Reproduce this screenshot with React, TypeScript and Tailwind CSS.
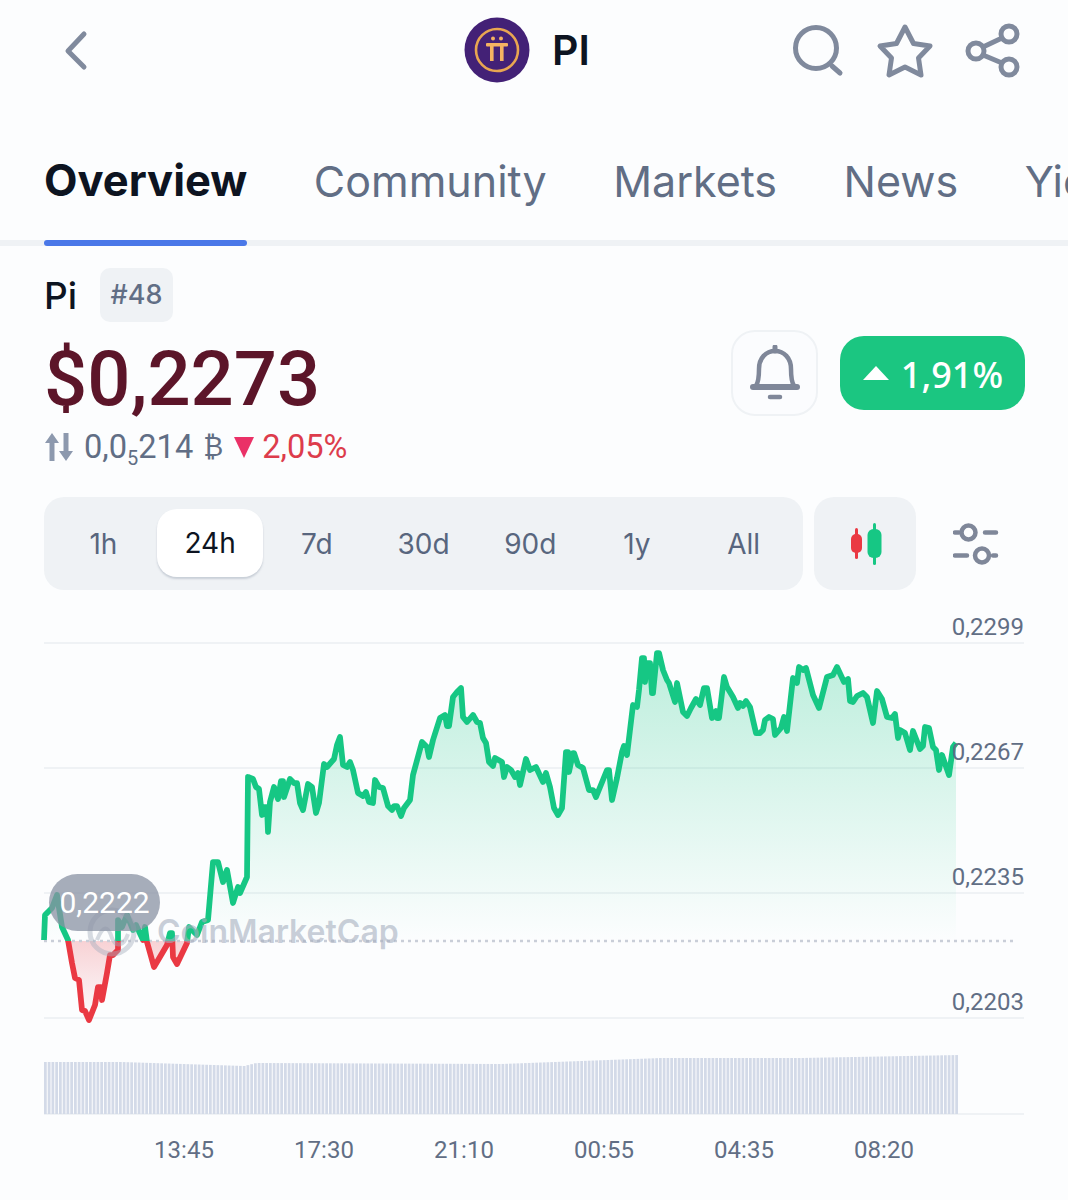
const points =
  "44,940 45,915 52,908 57,895 62,927 68,940 72,963 75,978 79,980 82,1010 85,1011 89,1020 95,1005 98,987 101,987 102,1000 107,973 110,955 113,955 118,950 118,920 122,927 127,915 133,930 136,925 143,940 145,927 147,942 154,967 167,945 170,933 172,933 173,957 177,964 187,943 189,927 197,935 202,922 208,920 213,862 218,862 223,882 227,870 233,903 238,887 240,893 247,877 " +
  "248,777 253,779 256,787 259,789 262,815 264,807 267,807 268,832 270,802 274,787 278,799 281,781 283,781 284,797 290,779 294,783 297,783 300,803 303,810 308,784 312,787 316,813 319,803 324,764 327,767 334,759 337,745 340,737 343,765 347,767 350,762 353,770 358,793 363,796 366,792 369,802 373,803 375,780 379,787 383,788 388,806 392,810 394,806 397,806 401,816 404,808 410,800 413,775 422,742 427,747 429,757 433,740 440,718 445,715 447,726 449,726 453,697 457,692 461,688 463,717 467,722 473,715 477,722 480,723 483,738 486,743 489,762 493,766 495,758 502,762 504,777 507,767 511,770 515,777 518,773 520,785 526,759 530,770 536,767 543,782 546,773 550,787 554,808 558,815 562,808 566,752 568,752 569,772 573,753 574,753 578,765 583,768 589,790 593,790 596,797 607,770 609,770 612,800 617,778 622,752 624,746 627,755 633,705 637,707 " +
  "639,690 642,658 644,658 645,682 647,663 650,663 652,693 653,693 657,653 659,653 663,670 667,680 669,683 675,702 677,683 683,712 687,716 691,708 696,699 700,705 704,688 707,688 712,718 716,711 717,718 719,718 724,677 727,687 733,697 738,708 740,703 743,706 746,701 750,707 756,733 760,733 763,730 765,720 769,717 773,719 775,735 781,728 784,717 787,731 793,678 797,683 799,667 803,670 806,668 813,695 819,708 827,677 833,675 837,667 844,682 848,679 850,701 853,702 857,696 863,693 867,697 873,723 877,691 882,699 887,717 892,718 895,714 898,738 900,730 905,733 910,750 913,731 920,749 923,746 925,727 929,728 933,747 936,750 939,770 942,755 949,775 953,747 956,743";

const periods = ["1h", "24h", "7d", "30d", "90d", "1y", "All"];
const tabs = ["Overview", "Community", "Markets", "News", "Yield"];
const times = ["13:45", "17:30", "21:10", "00:55", "04:35", "08:20"];
const gridLines = [643, 768, 893, 1018, 1114];
const yLabels = [
  { label: "0,2299", cls: "top-[23px]" },
  { label: "0,2267", cls: "top-[148px]" },
  { label: "0,2235", cls: "top-[273px]" },
  { label: "0,2203", cls: "top-[398px]" },
];

// top edge of the volume bars, by x
const volumeTop = (x: number) => {
  const stops = [
    [44, 1062],
    [120, 1062],
    [243, 1066],
    [255, 1063],
    [500, 1064],
    [660, 1058],
    [800, 1058],
    [958, 1055],
  ];
  for (let i = 1; i < stops.length; i++) {
    if (x <= stops[i][0]) {
      const [x0, y0] = stops[i - 1];
      const [x1, y1] = stops[i];
      return y0 + ((y1 - y0) * (x - x0)) / (x1 - x0);
    }
  }
  return 1055;
};

const bars: number[] = [];
for (let x = 44; x < 957; x += 3.75) bars.push(x);

const PiLogo = () => (
  <svg width="66" height="66" viewBox="0 0 66 66">
    <circle cx="33" cy="33" r="32.5" fill="#432176" />
    <circle cx="33" cy="33" r="21" fill="none" stroke="#e9a651" strokeWidth="2.6" />
    <rect x="22" y="26" width="22" height="3.4" rx="1" fill="#f5b362" />
    <rect x="26" y="28" width="3.6" height="16" fill="#f5b362" />
    <rect x="36" y="28" width="3.6" height="16" fill="#f5b362" />
    <circle cx="29" cy="21.5" r="2" fill="#f5b362" />
    <circle cx="37" cy="21.5" r="2" fill="#f5b362" />
  </svg>
);

const App = () => {
  return (
    <div
      className="w-[1068px] h-[1200px] overflow-hidden bg-[#fcfdfe] text-[#0d1421]"
      style={{ fontFamily: "Inter, sans-serif" }}
    >
      {/* Top bar */}
      <header className="flex h-[100px] items-center">
        <svg width="30" height="42" viewBox="0 0 30 42" fill="none" stroke="#808a9d" strokeWidth="5" strokeLinecap="round" strokeLinejoin="round" className="ml-[60px]">
          <path d="M24 5 8 22 24 38" />
        </svg>
        <div className="ml-[374px] flex items-center">
          <PiLogo />
          <span className="ml-[22px] text-[41px] font-semibold leading-none">PI</span>
        </div>
        <div className="ml-auto mr-[44px] flex items-center">
          <svg width="52" height="58" viewBox="0 0 52 58" fill="none" stroke="#808a9d" strokeWidth="5" strokeLinecap="round">
            <circle cx="24" cy="27" r="20.5" />
            <path d="M40 45 48 52" />
          </svg>
          <svg width="60" height="58" viewBox="0 0 60 58" fill="none" stroke="#808a9d" strokeWidth="5" strokeLinejoin="round" className="ml-[32px]">
            <path d="M29 6 37.5 22.5 54 25 42.5 37 45 54 29 46 13 54 15.5 37 4 25 20.5 22.5Z" />
          </svg>
          <svg width="60" height="58" viewBox="0 0 60 58" fill="none" stroke="#808a9d" strokeWidth="5" className="ml-[28px]">
            <circle cx="45" cy="13" r="8" />
            <circle cx="12" cy="30" r="8" />
            <circle cx="45" cy="46" r="8" />
            <path d="M19 26 38 17M19 34 38 42" />
          </svg>
        </div>
      </header>

      {/* Tabs */}
      <nav className="flex h-[146px] gap-[66.5px] overflow-hidden pl-[44px] shadow-[inset_0_-6px_0_#eff2f5]">
        {tabs.map((tab, i) => (
          <div
            key={tab}
            className={
              i === 0
                ? "relative flex h-[146px] shrink-0 items-center pt-[16px] text-[43.5px] font-bold"
                : "relative flex h-[146px] shrink-0 items-center pt-[16px] text-[43px] text-[#616e85]"
            }
          >
            {tab}
            {i === 0 && (
              <span className="absolute bottom-0 left-0 right-0 h-[6px] rounded-sm bg-[#4a78e8]" />
            )}
          </div>
        ))}
      </nav>

      {/* Name, price */}
      <section className="flex items-center justify-between pl-[44px] pr-[43px]">
        <div>
          <div className="mt-[22px] flex items-center">
            <span className="text-[37px] font-medium leading-none">Pi</span>
            <span className="ml-[23px] flex h-[54px] w-[73px] items-center justify-center rounded-[10px] bg-[#eff2f5] text-[27px] font-medium text-[#616e85]">
              #48
            </span>
          </div>
          <div
            className="mt-[9px] text-[76px] font-medium leading-[96px] text-[#5c1529]"
            style={{ fontFamily: "Roboto, sans-serif" }}
          >
            $0,2273
          </div>
          <div
            className="mt-[-5px] flex h-[50px] items-center text-[32.6px] font-[450] text-[#616e85]"
            style={{ fontFamily: "Roboto, sans-serif" }}
          >
            <svg width="30" height="30" viewBox="0 0 30 30" className="text-[#8d99ae]" fill="currentColor">
              <path d="M8 1 15 11H10.5V29H5.5V11H1Z" />
              <path d="M22 29 15 19H19.5V1H24.5V19H29Z" />
            </svg>
            <span className="ml-[10px]">
              0,0<span className="relative top-[7px] text-[20px]">5</span>214
            </span>
            <span className="ml-[10px]" style={{ fontFamily: "'DejaVu Sans', sans-serif", fontSize: 27, fontWeight: 300 }}>
              ₿
            </span>
            <svg width="22" height="24" viewBox="0 0 22 24" className="ml-[10px]">
              <path d="M1 2H21L11 23Z" fill="#ea3167" />
            </svg>
            <span className="ml-[7px] text-[#dd3c4c]">2,05%</span>
          </div>
        </div>
        <div className="mt-[28px] flex items-center">
          <div className="flex h-[86px] w-[87px] items-center justify-center rounded-[24px] border-2 border-[#eff2f5] bg-[#fbfcfe]">
            <svg width="52" height="56" viewBox="0 0 52 56" fill="none" stroke="#7f8799" strokeLinecap="round" strokeLinejoin="round">
              <path d="M26 2V6" strokeWidth="5" />
              <path d="M7 41C10 36 10 28 10 24C10 13 17 6 26 6C35 6 42 13 42 24C42 28 42 36 45 41" strokeWidth="4.5" />
              <path d="M4 42H48" strokeWidth="6" />
              <path d="M21 52H31" strokeWidth="4.5" />
            </svg>
          </div>
          <div className="ml-[22px] flex h-[74px] w-[185px] items-center justify-center rounded-[24px] bg-[#1bc681] text-white">
            <svg width="28" height="16" viewBox="0 0 28 16">
              <path d="M14 1 27 15H1Z" fill="#fff" />
            </svg>
            <span className="ml-[11px] pt-[3px] text-[36px] font-medium" style={{ fontFamily: "'Noto Sans', sans-serif" }}>
              1,91%
            </span>
          </div>
        </div>
      </section>

      {/* Range selector */}
      <section className="mt-[25px] flex items-center pl-[44px]">
        <div className="flex h-[93px] w-[759px] items-center rounded-[20px] bg-[#eff2f5] px-[6px]">
          {periods.map((p) =>
            p === "24h" ? (
              <div
                key={p}
                className="mb-[2px] flex h-[68px] flex-1 items-center justify-center rounded-[20px] bg-white text-[28px] shadow-[0_2px_2px_rgba(88,102,126,0.25)]"
              >
                {p}
              </div>
            ) : (
              <div key={p} className="flex h-[69px] flex-1 items-center justify-center text-[28px] text-[#58667e]">
                {p}
              </div>
            ),
          )}
        </div>
        <div className="ml-[11px] flex h-[93px] w-[102px] items-center justify-center rounded-[20px] bg-[#eff2f5]">
          <svg width="36" height="42" viewBox="0 0 36 42">
            <path d="M9.5 6.5V34.5" stroke="#ea3943" strokeWidth="3" strokeLinecap="round" />
            <rect x="4" y="11" width="11" height="19" rx="5" fill="#ea3943" />
            <path d="M27.5 1.5V40.5" stroke="#16c784" strokeWidth="3" strokeLinecap="round" />
            <rect x="20.5" y="6" width="14" height="29" rx="6" fill="#16c784" />
          </svg>
        </div>
        <svg width="48" height="42" viewBox="0 0 48 42" fill="none" stroke="#7f8799" strokeWidth="4.5" strokeLinecap="round" className="ml-[37px]">
          <path d="M2 9.5H6M32 9.5H43" />
          <circle cx="15.5" cy="9.5" r="7" />
          <path d="M2 32.5H14M40 32.5H43" />
          <circle cx="29" cy="32.5" r="7" />
        </svg>
      </section>

      {/* Chart */}
      <section className="relative h-[530px]">
        <svg width="1068" height="530" viewBox="0 590 1068 530" className="block" fill="none">
          <defs>
            <linearGradient id="upFill" gradientUnits="userSpaceOnUse" x1="0" y1="650" x2="0" y2="941">
              <stop offset="0" stopColor="#16c784" stopOpacity="0.28" />
              <stop offset="1" stopColor="#16c784" stopOpacity="0" />
            </linearGradient>
            <linearGradient id="downFill" gradientUnits="userSpaceOnUse" x1="0" y1="941" x2="0" y2="1020">
              <stop offset="0" stopColor="#ea3943" stopOpacity="0.22" />
              <stop offset="1" stopColor="#ea3943" stopOpacity="0" />
            </linearGradient>
            <clipPath id="above">
              <rect x="0" y="590" width="1068" height="351" />
            </clipPath>
            <clipPath id="below">
              <rect x="0" y="941" width="1068" height="179" />
            </clipPath>
          </defs>
          {gridLines.map((y) => (
            <line key={y} x1="44" x2="1024" y1={y} y2={y} stroke="#eff2f5" strokeWidth="2" />
          ))}
          {bars.map((x) => (
            <rect key={x} x={x} y={volumeTop(x)} width="2.75" height={1114 - volumeTop(x)} fill="#d3dae8" />
          ))}
          <polygon points={`44,941 ${points} 956,743 956,941`} fill="url(#upFill)" clipPath="url(#above)" />
          <polygon points={`44,941 ${points} 956,743 956,941`} fill="url(#downFill)" clipPath="url(#below)" />
          <line x1="44" x2="1016" y1="941" y2="941" stroke="#c9ced8" strokeWidth="2.5" strokeDasharray="3 4" />
          <polyline points={points} stroke="#16c784" strokeWidth="5.75" strokeLinejoin="round" clipPath="url(#above)" />
          <polyline points={points} stroke="#ea3943" strokeWidth="5.75" strokeLinejoin="round" clipPath="url(#below)" />
          {/* watermark mark */}
          <circle cx="112" cy="932" r="22" stroke="#a6afbf" strokeOpacity="0.45" strokeWidth="5" />
          <path d="M97 940C103 925 108 925 112 938C116 948 124 946 128 934" stroke="#a6afbf" strokeOpacity="0.45" strokeWidth="4" />
        </svg>

        {yLabels.map((y) => (
          <span key={y.label} className={`absolute right-[44px] text-[24px] leading-[28px] text-[#616e85] ${y.cls}`} style={{ fontFamily: "Roboto, sans-serif" }}>
            {y.label}
          </span>
        ))}

        <span className="absolute left-[157px] top-[322px] text-[32px] font-semibold leading-[40px] text-[#a6afbf]/60">
          CoinMarketCap
        </span>
        <span
          className="absolute left-[49px] top-[284px] flex h-[57px] w-[111px] items-center justify-center rounded-full bg-[#8a92a3]/75 text-[30px] text-white"
          style={{ fontFamily: "Roboto, sans-serif" }}
        >
          0,2222
        </span>
      </section>

      {/* Time axis */}
      <div
        className="ml-[114px] mt-[16px] flex text-[24px] leading-[28px] text-[#616e85]"
        style={{ fontFamily: "Roboto, sans-serif" }}
      >
        {times.map((t) => (
          <span key={t} className="w-[140px] text-center">
            {t}
          </span>
        ))}
      </div>
    </div>
  );
};

export default App;
